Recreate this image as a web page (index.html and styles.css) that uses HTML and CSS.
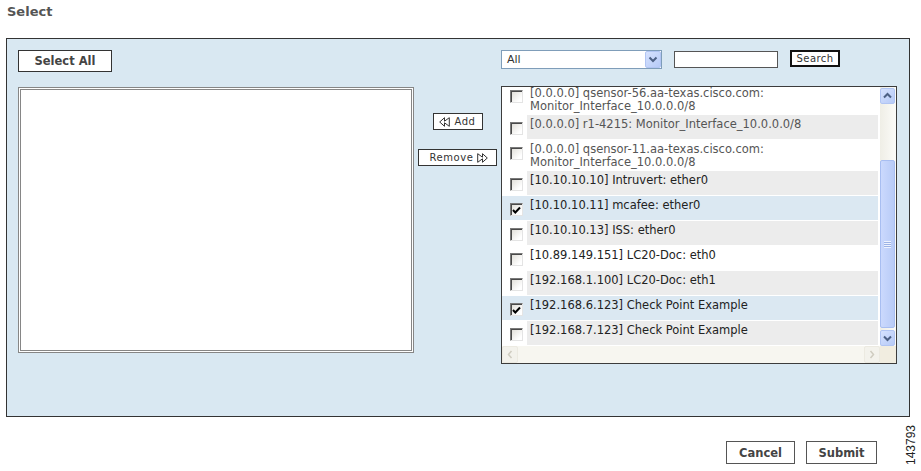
FILE: index.html
```html
<!DOCTYPE html>
<html>
<head>
<meta charset="utf-8">
<link rel="stylesheet" href="styles.css">
</head>
<body>
<div class="title">Select</div>
<div class="panel">
  <div class="leftcol">
    <button class="btn selectall">Select All</button>
    <div class="leftlist"></div>
  </div>
  <div class="mid">
    <button class="btn small add"><svg width="11" height="10" viewBox="0 0 11 10"><path d="M0.7 5 L5.5 0.7 V4.2 L10.3 0.7 V9.3 L5.5 5.8 V9.3 Z" fill="none" stroke="#333" stroke-width="1"/></svg><span>Add</span></button>
    <button class="btn small remove"><span>Remove</span><svg width="11" height="10" viewBox="0 0 11 10"><path d="M10.3 5 L5.5 0.7 V4.2 L0.7 0.7 V9.3 L5.5 5.8 V9.3 Z" fill="none" stroke="#333" stroke-width="1"/></svg></button>
  </div>
  <div class="rightcol">
    <div class="toolbar">
      <div class="combo"><span>All</span><span class="xpbtn combo-arrow"><svg width="16" height="17" viewBox="0 0 16 17"><path d="M4.5 6.5 L8 10 L11.5 6.5" fill="none" stroke="#4d6185" stroke-width="2"/></svg></span></div>
      <div class="input"></div>
      <button class="btn search">Search</button>
    </div>
    <div class="rlist">
      <div class="rows">
        <div class="row dim first"><div class="cbcell"><span class="cb"></span></div><div class="txt">[0.0.0.0] qsensor-56.aa-texas.cisco.com:<br>Monitor_Interface_10.0.0.0/8</div></div>
        <div class="row dim gray"><div class="cbcell"><span class="cb"></span></div><div class="txt">[0.0.0.0] r1-4215: Monitor_Interface_10.0.0.0/8</div></div>
        <div class="row dim"><div class="cbcell"><span class="cb"></span></div><div class="txt">[0.0.0.0] qsensor-11.aa-texas.cisco.com:<br>Monitor_Interface_10.0.0.0/8</div></div>
        <div class="row gray"><div class="cbcell"><span class="cb"></span></div><div class="txt">[10.10.10.10] Intruvert: ether0</div></div>
        <div class="row sel"><div class="cbcell"><span class="cb"><svg width="11" height="11" viewBox="0 0 11 11"><path d="M2 5 L4.3 7.5 L9 2.5" fill="none" stroke="#000" stroke-width="2"/></svg></span></div><div class="txt">[10.10.10.11] mcafee: ether0</div></div>
        <div class="row gray"><div class="cbcell"><span class="cb"></span></div><div class="txt">[10.10.10.13] ISS: ether0</div></div>
        <div class="row"><div class="cbcell"><span class="cb"></span></div><div class="txt">[10.89.149.151] LC20-Doc: eth0</div></div>
        <div class="row gray"><div class="cbcell"><span class="cb"></span></div><div class="txt">[192.168.1.100] LC20-Doc: eth1</div></div>
        <div class="row sel"><div class="cbcell"><span class="cb"><svg width="11" height="11" viewBox="0 0 11 11"><path d="M2 5 L4.3 7.5 L9 2.5" fill="none" stroke="#000" stroke-width="2"/></svg></span></div><div class="txt">[192.168.6.123] Check Point Example</div></div>
        <div class="row gray"><div class="cbcell"><span class="cb"></span></div><div class="txt">[192.168.7.123] Check Point Example</div></div>
      </div>
      <div class="vsb">
        <span class="xpbtn sbtn"><svg width="15" height="16" viewBox="0 0 15 16"><path d="M4 9.5 L7.5 6 L11 9.5" fill="none" stroke="#4d6185" stroke-width="2"/></svg></span>
        <span class="thumb"><span class="grip"></span></span>
        <span class="xpbtn sbtn down"><svg width="15" height="16" viewBox="0 0 15 16"><path d="M4 6.5 L7.5 10 L11 6.5" fill="none" stroke="#4d6185" stroke-width="2"/></svg></span>
      </div>
      <div class="hsb">
        <span class="hbtn"><svg width="16" height="17" viewBox="0 0 16 17"><path d="M9.5 5 L6.5 8.5 L9.5 12" fill="none" stroke="#cfccc0" stroke-width="1.5"/></svg></span>
        <span class="hbtn"><svg width="16" height="17" viewBox="0 0 16 17"><path d="M6.5 5 L9.5 8.5 L6.5 12" fill="none" stroke="#cfccc0" stroke-width="1.5"/></svg></span>
      </div>
      <div class="corner"></div>
    </div>
  </div>
</div>
<div class="footer">
  <button class="btn fbtn cancel">Cancel</button>
  <button class="btn fbtn submit">Submit</button>
  <span class="fig">143793</span>
</div>
</body>
</html>
```

FILE: styles.css
```css
* { box-sizing: border-box; }

body {
  margin: 0;
  width: 921px;
  height: 471px;
  overflow: hidden;
  background: #fff;
  font-family: "DejaVu Sans", Verdana, sans-serif;
}

.title {
  height: 38px;
  padding: 4px 0 0 7px;
  font-size: 13px;
  line-height: 15px;
  font-weight: bold;
  color: #555;
}

.panel {
  margin-left: 6px;
  width: 904px;
  height: 379px;
  border: 1px solid #333;
  background: #d9e8f2;
  padding: 11px 0 0 11px;
  display: grid;
  grid-template-columns: 396px 79px 396px;
  column-gap: 4px;
  align-items: start;
}

.btn {
  margin: 0;
  padding: 0;
  background: #fff;
  border: 1px solid #333;
  color: #444;
  font-family: inherit;
  display: flex;
  align-items: center;
  justify-content: center;
}

.leftcol { display: flex; flex-direction: column; }

.selectall {
  width: 94px;
  height: 22px;
  font-weight: bold;
  font-size: 11.5px;
}

.leftlist {
  margin-top: 15px;
  height: 266px;
  border: 3px double #868686;
  background: #fff;
}

.mid {
  display: flex;
  flex-direction: column;
  align-items: center;
  padding-top: 63px;
  gap: 19px;
}

.small {
  height: 17px;
  font-size: 10px;
  letter-spacing: 0.6px;
  color: #333;
  gap: 4px;
}
.add { width: 50px; }
.remove { width: 79px; padding-left: 2px; gap: 3px; }

.rightcol { display: flex; flex-direction: column; }

.toolbar {
  display: flex;
  align-items: flex-start;
  height: 19px;
}

.combo {
  width: 161px;
  height: 19px;
  border: 1px solid #7f9db9;
  background: #fff;
  display: flex;
  align-items: center;
  justify-content: space-between;
  padding-left: 5px;
  font-size: 11px;
  color: #333;
}

.xpbtn {
  display: block;
  border: 1px solid #b1c5f3;
  border-radius: 2px;
  background: linear-gradient(135deg, #d6e2fe, #b6caf7);
}
.xpbtn svg { display: block; margin: -1px; }

.combo-arrow { width: 16px; height: 17px; }

.input {
  width: 104px;
  height: 17px;
  margin: 1px 0 0 12px;
  border: 1px solid #555;
  background: #fff;
}

.search {
  width: 50px;
  height: 17px;
  margin-left: 12px;
  border: 2px solid #111;
  font-size: 10px;
  letter-spacing: 0.4px;
  color: #333;
}

.rlist {
  margin-top: 17px;
  height: 278px;
  border: 1px solid #3c3c3c;
  background: #fff;
  display: grid;
  grid-template-columns: 378px 16px;
  grid-template-rows: 259px 17px;
}

.rows { overflow: hidden; background: #fff; }

.row {
  display: flex;
  margin: 0 2px 1px 0;
}
.row.sel { background: #dbe8f2; }
.row.gray .txt { background: #ececec; }

.cbcell {
  width: 25px;
  flex: none;
  padding: 7px 0 0 8px;
  min-height: 24px;
}
.row.first .cbcell { padding-top: 3px; }
.row.first .txt { padding-top: 0; }

.cb {
  display: block;
  width: 13px;
  height: 13px;
  border: 1px solid;
  border-color: #7a7a7a #e4e4e4 #e4e4e4 #7a7a7a;
  box-shadow: inset 1px 1px 0 #4a4a4a;
  background: linear-gradient(135deg, #dedcd5, #fff 80%);
}
.cb svg { display: block; margin: 1px 0 0 0; }

.txt {
  flex: 1;
  min-height: 24px;
  padding: 3px 0 1px 3px;
  font-size: 11.5px;
  line-height: 13px;
  color: #222;
  white-space: nowrap;
}
.row.dim .txt { color: #555; }

.vsb {
  display: flex;
  flex-direction: column;
  padding-top: 1px;
  background: linear-gradient(90deg, #efeee6, #fbfbf8);
}
.sbtn { width: 15px; height: 16px; }
.sbtn.down { margin-top: 2px; }

.thumb {
  display: flex;
  align-items: center;
  justify-content: center;
  width: 15px;
  height: 168px;
  margin-top: 56px;
  border: 1px solid #a8bef1;
  border-radius: 2px;
  background: linear-gradient(90deg, #cbd9fd, #b8cbf7);
}
.grip {
  width: 7px;
  height: 7px;
  background: repeating-linear-gradient(180deg, #eef3fe 0 1px, #9cb3e6 1px 2px);
}

.hsb {
  display: flex;
  justify-content: space-between;
  background: #f7f6f0;
}
.hbtn {
  display: block;
  width: 16px;
  height: 17px;
  border: 1px solid #eceae1;
  border-radius: 2px;
  background: #f3f2ec;
}
.hbtn svg { display: block; margin: -1px; }

.corner { background: #f1ede0; }

.footer {
  display: flex;
  justify-content: flex-end;
  align-items: flex-end;
  margin-top: 8px;
  padding-right: 3px;
}

.fbtn {
  height: 23px;
  margin-bottom: 1px;
  font-weight: bold;
  font-size: 11.5px;
  color: #444;
  border: 1px solid #555;
}
.cancel { width: 69px; margin-right: 11px; }
.submit { width: 71px; margin-right: 28px; }

.fig {
  writing-mode: vertical-rl;
  transform: rotate(180deg);
  font-family: "Liberation Sans", Arial, sans-serif;
  font-size: 12px;
  line-height: 13px;
  color: #222;
}
```
